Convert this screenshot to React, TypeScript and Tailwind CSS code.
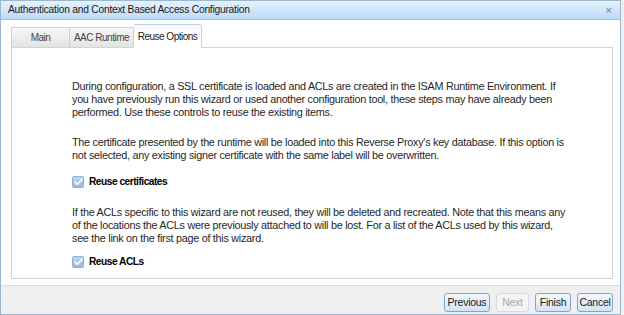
import React from "react";

const font = { fontFamily: "Tahoma, 'Liberation Sans', Arial, sans-serif" };

function Check({ label }: { label: string }) {
  return (
    <div className="flex items-center gap-[5px] h-[14px]">
      <div className="w-[12px] h-[12px] rounded-[2px] border border-[#8fb0d3] bg-gradient-to-b from-[#c3d8ee] to-[#98b9dc] flex items-center justify-center">
        <svg width="9" height="8" viewBox="0 0 9 8">
          <path d="M1.2 4.2 L3.4 6.3 L7.8 1.5" stroke="#ffffff" strokeWidth="1.6" fill="none" strokeLinecap="round" strokeLinejoin="round" />
        </svg>
      </div>
      <span className="font-bold text-[10.2px] -tracking-[0.5px] text-black">{label}</span>
    </div>
  );
}

function Btn({ children, disabled, w }: { children: React.ReactNode; disabled?: boolean; w: string }) {
  return (
    <div
      className={
        "h-[19px] rounded-[3px] border flex items-center justify-center text-[10.5px] tracking-tight whitespace-nowrap shrink-0 " +
        w +
        " " +
        (disabled
          ? "border-[#d3dbe3] bg-[#f3f4f5] text-[#a8a8a8]"
          : "border-[#7fa6d3] bg-gradient-to-b from-[#f3f8fd] to-[#d3e4f6] text-[#1a1a1a]")
      }
    >
      {children}
    </div>
  );
}

const tabText = "text-[10px] -tracking-[0.5px]";

export default function App() {
  return (
    <div className="w-[624px] h-[315px] bg-[#f0f0f0] text-[#1f1f1f]" style={font}>
      <div className="w-[621px] h-[315px] border border-[#9cb6d0] bg-white flex flex-col">
        <div className="h-[19px] shrink-0 border-b border-[#9fc0e0] bg-gradient-to-b from-[#e6f2fd] to-[#bcdafb] flex items-center justify-between pl-[7px] pr-[8px]">
          <span className="text-[10.3px] text-[#1a1a1a] tracking-tight whitespace-nowrap">Authentication and Context Based Access Configuration</span>
          <span className="text-[11px] font-bold text-[#8a9aab] leading-none">×</span>
        </div>
        <div className="flex-1 px-[10px] pt-[4px]">
          <div className="flex items-end h-[23px]">
            <div className={"w-[59px] shrink-0 whitespace-nowrap h-[20px] border border-[#cfcfcf] border-b-0 bg-gradient-to-b from-[#f7f7f7] to-[#e3e3e3] flex items-center justify-center text-[#444] " + tabText}>
              Main
            </div>
            <div className={"w-[64px] shrink-0 whitespace-nowrap h-[20px] border border-[#cfcfcf] border-l-0 border-b-0 bg-gradient-to-b from-[#f7f7f7] to-[#e3e3e3] flex items-center justify-center text-[#444] " + tabText}>
              AAC Runtime
            </div>
            <div className={"w-[68px] shrink-0 whitespace-nowrap h-[24px] -mb-px relative z-10 border border-[#cfcfcf] border-l-0 border-b-0 border-t-[#bcd3ea] bg-gradient-to-b from-[#f4f8fc] to-white to-40% flex items-center justify-center text-[#1a1a1a] rounded-tr-[2px] " + tabText}>
              Reuse Options
            </div>
          </div>
          <div className="w-[602px] h-[232px] border border-[#d3d3d3] pl-[60px] pt-[32px]">
            <p className="whitespace-nowrap text-[10.8px] leading-[13px] tracking-tight">
              During configuration, a SSL certificate is loaded and ACLs are created in the ISAM Runtime Environment. If
              <br />
              you have previously run this wizard or used another configuration tool, these steps may have already been
              <br />
              performed. Use these controls to reuse the existing items.
            </p>
            <p className="whitespace-nowrap mt-[17px] text-[10.8px] leading-[13px] tracking-tight">
              The certificate presented by the runtime will be loaded into this Reverse Proxy's key database. If this option is
              <br />
              not selected, any existing signer certificate with the same label will be overwritten.
            </p>
            <div className="mt-[13px]">
              <Check label="Reuse certificates" />
            </div>
            <p className="whitespace-nowrap mt-[17px] text-[10.8px] leading-[13px] tracking-tight">
              If the ACLs specific to this wizard are not reused, they will be deleted and recreated. Note that this means any
              <br />
              of the locations the ACLs were previously attached to will be lost. For a list of the ACLs used by this wizard,
              <br />
              see the link on the first page of this wizard.
            </p>
            <div className="mt-[10px]">
              <Check label="Reuse ACLs" />
            </div>
          </div>
        </div>
        <div className="h-[29px] shrink-0 border-t border-[#dedede] bg-[#efefef] flex items-start justify-end gap-[6px] pt-[7px] pr-[7px]">
          <Btn w="w-[46px]">Previous</Btn>
          <Btn w="w-[33px]" disabled>Next</Btn>
          <Btn w="w-[36px]">Finish</Btn>
          <Btn w="w-[36px]">Cancel</Btn>
        </div>
      </div>
    </div>
  );
}
